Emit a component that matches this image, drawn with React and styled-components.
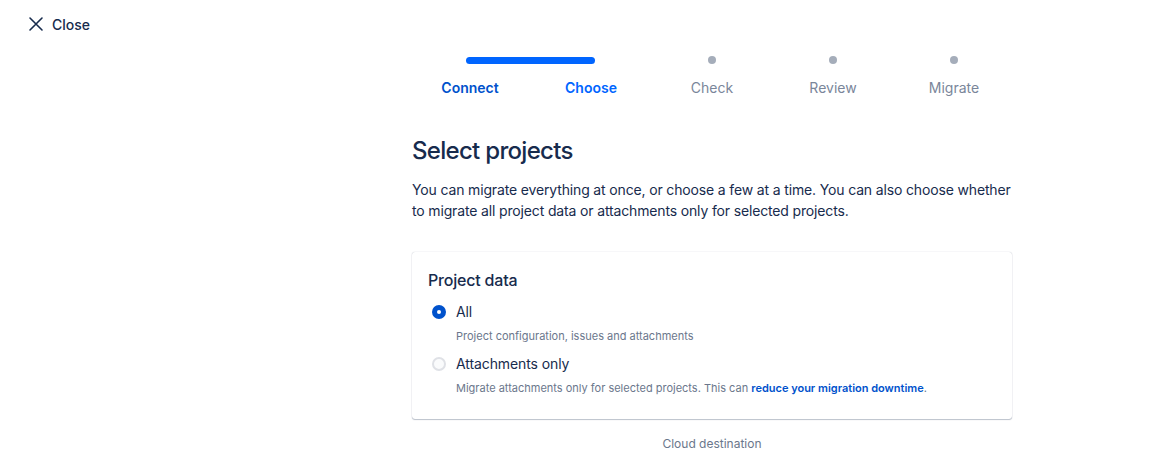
import React from "react";
import styled, { createGlobalStyle } from "styled-components";

const Global = createGlobalStyle`
  html, body { margin: 0; padding: 0; background: #fff; }
  body {
    font-family: Inter, "Noto Sans", "Liberation Sans", sans-serif;
    color: #172B4D;
    -webkit-font-smoothing: antialiased;
  }
`;

const Page = styled.div`
  width: 1155px;
  height: 453px;
  overflow: hidden;
  display: flex;
  flex-direction: column;
`;

const TopBar = styled.div`
  display: flex;
  align-items: center;
  height: 48px;
  padding-left: 28px;
`;

const CloseButton = styled.button`
  display: flex;
  align-items: center;
  gap: 8px;
  border: none;
  background: none;
  padding: 0;
  font: inherit;
  font-size: 14px;
  font-weight: 500;
  color: #172B4D;
  cursor: pointer;
`;

const Main = styled.main`
  padding-left: 412px;
  width: 600px;
  display: flex;
  flex-direction: column;
`;

const Stepper = styled.div`
  display: grid;
  grid-template-columns: repeat(5, 121px);
  grid-template-rows: 8px 20px;
  row-gap: 14px;
  margin: 8px -2.5px 0;
`;

const Bar = styled.div`
  grid-column: ${(p) => p.$from} / ${(p) => p.$to};
  grid-row: 1;
  margin: 0 56.5px;
  height: 7px;
  align-self: center;
  border-radius: 4px;
  background: #0065FF;
`;

const Dot = styled.div`
  grid-column: ${(p) => p.$col};
  grid-row: 1;
  justify-self: center;
  width: 8px;
  height: 8px;
  border-radius: 50%;
  background: #A5ADBA;
`;

const StepLabel = styled.div`
  grid-column: ${(p) => p.$col};
  grid-row: 2;
  text-align: center;
  font-size: 14px;
  line-height: 20px;
  font-weight: ${(p) => (p.$state === "todo" ? 400 : 600)};
  color: ${(p) =>
    p.$state === "done" ? "#0052CC" : p.$state === "current" ? "#0065FF" : "#7A869A"};
`;

const Heading = styled.h1`
  margin: 39px 0 0;
  font-size: 24px;
  line-height: 28px;
  font-weight: 500;
  letter-spacing: -0.7px;
  color: #172B4D;
`;

const Intro = styled.p`
  margin: 14px 0 0;
  font-size: 14px;
  line-height: 21px;
  letter-spacing: -0.15px;
  color: #172B4D;
`;

const Card = styled.section`
  margin-top: 31px;
  padding: 16px 16px 23px;
  border-radius: 3px;
  background: #fff;
  box-shadow: 0 1px 1px rgba(9, 30, 66, 0.25), 0 0 1px rgba(9, 30, 66, 0.31);
  display: flex;
  flex-direction: column;
`;

const CardTitle = styled.h2`
  margin: 0 0 8px;
  font-size: 16px;
  line-height: 24px;
  font-weight: 500;
  letter-spacing: -0.2px;
  color: #172B4D;
`;

const Option = styled.label`
  display: flex;
  flex-direction: column;
  & + & { margin-top: 8px; }
`;

const OptionRow = styled.div`
  display: flex;
  align-items: center;
  height: 24px;
  gap: 10px;
  padding-left: 4px;
`;

const Radio = styled.span`
  box-sizing: border-box;
  width: 14px;
  height: 14px;
  border-radius: 50%;
  flex: none;
  position: relative;
  background: ${(p) => (p.$checked ? "#0052CC" : "#FAFBFC")};
  border: 2px solid ${(p) => (p.$checked ? "#0052CC" : "#DFE1E6")};
  &::after {
    content: "";
    display: ${(p) => (p.$checked ? "block" : "none")};
    position: absolute;
    left: 50%;
    top: 50%;
    width: 4px;
    height: 4px;
    margin: -2px 0 0 -2px;
    border-radius: 50%;
    background: #fff;
  }
`;

const OptionLabel = styled.span`
  font-size: 14px;
  line-height: 20px;
  letter-spacing: -0.1px;
  color: #172B4D;
`;

const OptionHelp = styled.div`
  margin-top: 4px;
  padding-left: 28px;
  font-size: 11px;
  line-height: 16px;
  color: #6B778C;
`;

const Link = styled.a`
  color: #0052CC;
  font-weight: 600;
  text-decoration: none;
`;

const SectionCaption = styled.div`
  margin-top: 17px;
  text-align: center;
  font-size: 12px;
  line-height: 16px;
  color: #6B778C;
`;

const steps = [
  { label: "Connect", state: "done" },
  { label: "Choose", state: "current" },
  { label: "Check", state: "todo" },
  { label: "Review", state: "todo" },
  { label: "Migrate", state: "todo" },
];

export default function App() {
  return (
    <>
      <Global />
      <Page>
        <TopBar>
          <CloseButton>
            <svg width="16" height="16" viewBox="0 0 16 16" fill="none">
              <path d="M2 2L14 14M14 2L2 14" stroke="#172B4D" strokeWidth="1.6" strokeLinecap="round" />
            </svg>
            Close
          </CloseButton>
        </TopBar>
        <Main>
          <Stepper>
            <Bar $from={1} $to={3} />
            {steps.map((s, i) =>
              s.state === "todo" ? <Dot key={"d" + i} $col={i + 1} /> : null
            )}
            {steps.map((s, i) => (
              <StepLabel key={s.label} $col={i + 1} $state={s.state}>
                {s.label}
              </StepLabel>
            ))}
          </Stepper>
          <Heading>Select projects</Heading>
          <Intro>
            You can migrate everything at once, or choose a few at a time. You can also choose whether
            to migrate all project data or attachments only for selected projects.
          </Intro>
          <Card>
            <CardTitle>Project data</CardTitle>
            <Option>
              <OptionRow>
                <Radio $checked />
                <OptionLabel>All</OptionLabel>
              </OptionRow>
              <OptionHelp>Project configuration, issues and attachments</OptionHelp>
            </Option>
            <Option>
              <OptionRow>
                <Radio />
                <OptionLabel>Attachments only</OptionLabel>
              </OptionRow>
              <OptionHelp>
                Migrate attachments only for selected projects. This can{" "}
                <Link href="#">reduce your migration downtime</Link>.
              </OptionHelp>
            </Option>
          </Card>
          <SectionCaption>Cloud destination</SectionCaption>
        </Main>
      </Page>
    </>
  );
}
